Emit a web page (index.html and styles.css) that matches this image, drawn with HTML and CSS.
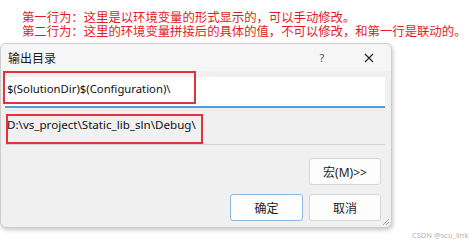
FILE: index.html
```html
<!DOCTYPE html>
<html lang="zh-CN">
<head>
<meta charset="utf-8">
<title>输出目录</title>
<link rel="stylesheet" href="styles.css">
</head>
<body>
<div class="page">
  <div class="note">
    <p>第一行为：这里是以环境变量的形式显示的，可以手动修改。</p>
    <p>第二行为：这里的环境变量拼接后的具体的值，不可以修改，和第一行是联动的。</p>
  </div>
  <div class="dialog">
    <div class="titlebar">
      <span class="title">输出目录</span>
      <span class="help">?</span>
      <span class="close">
        <svg width="10" height="10" viewBox="0 0 10 10"><path d="M1 1 L9 9 M9 1 L1 9" stroke="#222" stroke-width="1.1" fill="none"/></svg>
      </span>
    </div>
    <div class="body">
      <div class="editbox">$(SolutionDir)$(Configuration)\</div>
      <div class="preview">D:\vs_project\Static_lib_sln\Debug\</div>
      <div class="actions">
        <button class="btn">宏(M)&gt;&gt;</button>
        <div class="btnrow">
          <button class="btn primary">确定</button>
          <button class="btn">取消</button>
        </div>
      </div>
    </div>
    <svg class="grip" width="9" height="9" viewBox="0 0 9 9"><path d="M8 2 L2 8 M8 5 L5 8" stroke="#a8a8a8" stroke-width="1" fill="none"/></svg>
    <div class="mark mark1"></div>
    <div class="mark mark2"></div>
  </div>
  <div class="watermark">CSDN @scu_link</div>
</div>
</body>
</html>
```
FILE: styles.css
```css
html, body {
  margin: 0;
  padding: 0;
  background: #ffffff;
}
.page {
  position: relative;
  width: 474px;
  height: 243px;
  overflow: hidden;
  font-family: "Noto Sans", "Noto Sans CJK SC", sans-serif;
}
.note {
  padding: 10px 0 0 22px;
  height: 43px;
  box-sizing: border-box;
}
.note p {
  margin: 0;
  font-family: "Noto Sans CJK SC", sans-serif;
  font-size: 12.35px;
  line-height: 14px;
  color: #e31b25;
  white-space: nowrap;
}
.dialog {
  position: relative;
  width: 392px;
  height: 185px;
  box-sizing: border-box;
  background: #f0f0f0;
  border: 1px solid #cdcdcd;
  border-radius: 6px;
  box-shadow: 1px 2px 4px rgba(0, 0, 0, 0.22);
  display: flex;
  flex-direction: column;
}
.titlebar {
  height: 27px;
  flex: none;
  display: flex;
  align-items: center;
  background: #f6f6f6;
  border-radius: 6px 6px 0 0;
  padding-left: 7px;
}
.title {
  font-family: "Noto Sans CJK SC", sans-serif;
  font-size: 12px;
  color: #1a1a1a;
  flex: 1;
}
.help {
  font-size: 11px;
  color: #555;
  width: 12px;
  text-align: center;
  margin-right: 36px;
}
.close {
  display: flex;
  width: 10px;
  margin-right: 17px;
}
.body {
  flex: 1;
  display: flex;
  flex-direction: column;
  padding: 6px 6px 0 4px;
}
.editbox {
  height: 31px;
  box-sizing: border-box;
  background: #ffffff;
  border-bottom: 2px solid #5b9bd5;
  font-size: 11.3px;
  color: #111;
  padding: 4px 0 0 2px;
  white-space: nowrap;
}
.preview {
  margin-top: 2px;
  height: 35px;
  box-sizing: border-box;
  border-top: 1px solid #e6e6e6;
  border-bottom: 1px solid #d2d2d2;
  font-size: 11.6px;
  color: #111;
  padding: 6px 0 0 2px;
  white-space: nowrap;
}
.actions {
  display: flex;
  flex-direction: column;
  align-items: flex-end;
  padding-right: 4px;
  margin-top: 13px;
  gap: 9px;
}
.btnrow {
  display: flex;
  gap: 6px;
}
.btn {
  width: 72px;
  height: 27px;
  box-sizing: border-box;
  background: #fdfdfd;
  border: 1px solid #d6d6d6;
  border-radius: 3px;
  font-family: "Noto Sans", "Noto Sans CJK SC", sans-serif;
  font-size: 12px;
  color: #1a1a1a;
  padding: 0;
}
.btn.primary {
  width: 73px;
  border-color: #8cb8e0;
}
.grip {
  position: absolute;
  right: 1px;
  bottom: 1px;
}
.mark {
  position: absolute;
  border: 2px solid #e0333a;
  box-sizing: border-box;
}
.mark1 {
  left: 2px;
  top: 27px;
  width: 193px;
  height: 33px;
}
.mark2 {
  left: 5px;
  top: 70px;
  width: 197px;
  height: 30px;
}
.watermark {
  position: absolute;
  left: 412px;
  top: 230px;
  font-size: 7.5px;
  color: #b4b4b4;
  white-space: nowrap;
}
```
